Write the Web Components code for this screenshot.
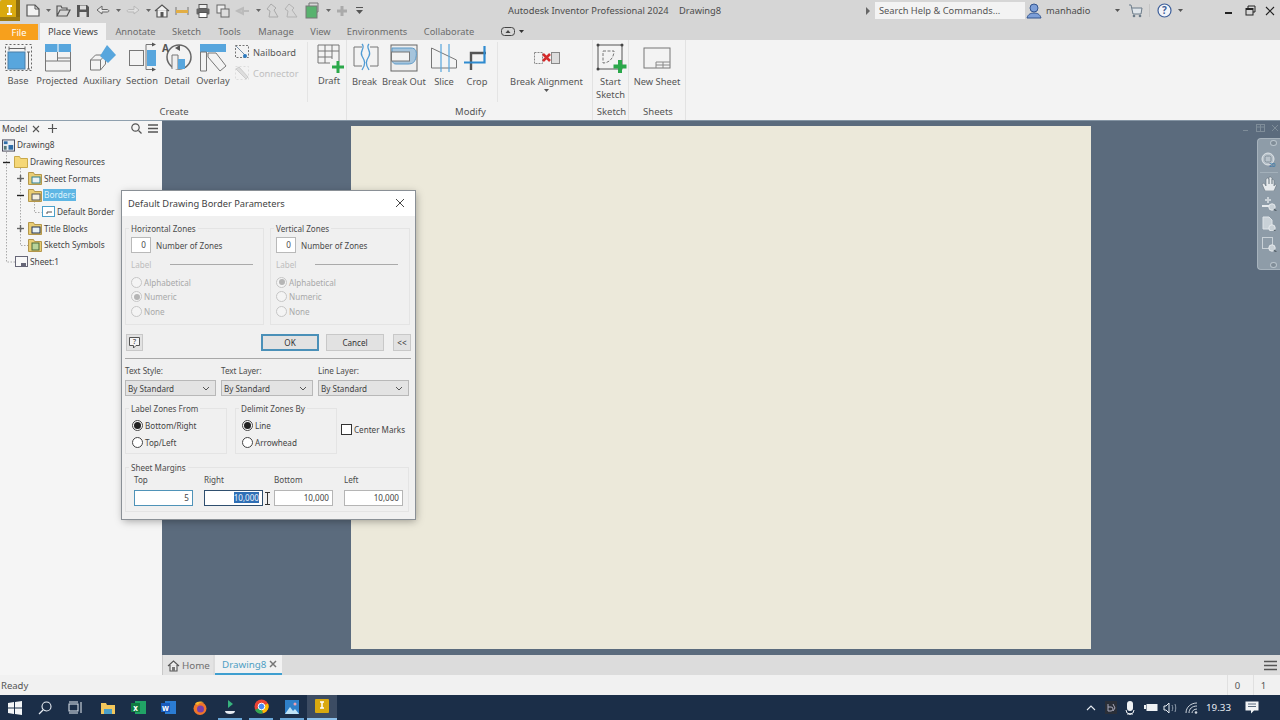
<!DOCTYPE html>
<html lang="en"><head><meta charset="utf-8"><title>Inventor</title>
<style>
html,body{margin:0;padding:0;width:1280px;height:720px;overflow:hidden;background:#5b6b7d;font:9.3px "Noto Sans",sans-serif;color:#4a4a4a}
svg{display:block}
</style></head><body>
<inv-app>
 <inv-titlebar slot="top">
  <qa-btn w="21"><svg width="21" height="22" viewBox="0 0 21 22"><rect x="0" y="0" width="20" height="21" rx="2" fill="#d9a90f"/><rect x="16" y="0" width="4" height="21" fill="#8d6d10"/><rect y="17" width="20" height="4" fill="#9c7a12"/><path d="M7 6h5M7 14h5M9.500 6v8" stroke="#fff" stroke-width="1.800"/></svg></qa-btn>
  <span style="width:2px"></span>
  <qa-btn w="20"><svg width="16" height="16"><path d="M2 2h8l4 4v7H2z" fill="#f2f2f2" stroke="#555" stroke-width="1.200"/><path d="M10 2v4h4" fill="none" stroke="#555"/></svg></qa-btn>
  <qa-btn w="10" caret></qa-btn>
  <qa-btn w="20"><svg width="16" height="16"><path d="M2 13V3h4l1 2h5v2M2 13l3-6h10l-3 6z" fill="none" stroke="#555" stroke-width="1.200"/></svg></qa-btn>
  <qa-btn w="20"><svg width="16" height="16"><path d="M2 2h10l2 2v10H2z" fill="#555"/><rect x="5" y="2.500" width="6" height="4" fill="#ddd"/><rect x="4.500" y="9" width="7" height="5" fill="#ddd"/></svg></qa-btn>
  <qa-btn w="20"><svg width="16" height="16"><path d="M7 3 2 7l5 4V9h5c1 0 2-.5 2-1s-1-1.500-2-1.500H7z" fill="#e8e8e8" stroke="#666"/></svg></qa-btn>
  <qa-btn w="10" caret></qa-btn>
  <qa-btn w="20"><svg width="16" height="16"><path d="M9 3l5 4-5 4V9H4C3 9 2 8.500 2 8s1-1.500 2-1.500h5z" fill="#e0e0e0" stroke="#b8b8b8"/></svg></qa-btn>
  <qa-btn w="10" caret></qa-btn>
  <qa-btn w="18"><svg width="16" height="16"><path d="M1 8l7-6 7 6M3 7v7h10V7" fill="#f1f1f1" stroke="#555" stroke-width="1.200"/><rect x="6.500" y="9" width="3" height="5" fill="#555"/></svg></qa-btn>
  <qa-btn w="21"><svg width="16" height="16"><path d="M2 4v8M14 4v8" stroke="#777"/><rect x="2" y="7" width="12" height="3" fill="#e2ae45"/></svg></qa-btn>
  <qa-btn w="21"><svg width="16" height="16"><rect x="4" y="1.500" width="8" height="4" fill="#eee" stroke="#555"/><rect x="1.500" y="5.500" width="13" height="6" rx="1" fill="#666"/><rect x="4" y="9.500" width="8" height="5" fill="#fff" stroke="#555"/></svg></qa-btn>
  <qa-btn w="20"><svg width="16" height="16"><rect x="2" y="2" width="8" height="8" fill="#eee" stroke="#666"/><rect x="6" y="6" width="8" height="8" fill="#ddd" stroke="#666"/></svg></qa-btn>
  <qa-btn w="20"><svg width="16" height="16"><path d="M2 8l6-3v6zM8 8h6" stroke="#bbb" fill="#c6c6c6" stroke-width="2"/></svg></qa-btn>
  <qa-btn w="10" caret></qa-btn>
  <qa-btn w="19"><svg width="16" height="16"><path d="M6 1l5 4-2 2 4 7H4l1-6-3-2z" fill="none" stroke="#aaa"/></svg></qa-btn>
  <qa-btn w="20"><svg width="16" height="16"><path d="M5 1l5 4-2 2 5 7H3l1-6-3-2z" fill="none" stroke="#b3b3b3"/></svg></qa-btn>
  <qa-btn w="22"><svg width="18" height="18"><rect x="2" y="4" width="11" height="12" fill="#58b26e" stroke="#777"/><path d="M5 4V1h9v9h-1" fill="none" stroke="#777"/></svg></qa-btn>
  <qa-btn w="8" caret></qa-btn>
  <qa-btn w="20"><svg width="14" height="14"><path d="M7 2v10M2 7h10" stroke="#aaa" stroke-width="3"/></svg></qa-btn>
  <qa-btn w="14"><svg width="9" height="9"><path d="M1 1.500h7" stroke="#555"/><path d="M1 4h7L4.500 8z" fill="#555"/></svg></qa-btn>
  <bar-text w="171" style="margin-left:142px">Autodesk Inventor Professional 2024</bar-text>
  <bar-text>Drawing8</bar-text>
  <span style="flex:1"></span>
  <svg width="6" height="8" style="margin-right:4px"><path d="M1 0l4 4-4 4z" fill="#666"/></svg>
  <inv-search>Search Help &amp; Commands...</inv-search>
  <svg width="16" height="16" style="margin:0 4px 0 1px"><circle cx="8" cy="5" r="4" fill="#7d9fd8" stroke="#33558f"/><path d="M1 15c1-4 4-5 7-5s6 1 7 5z" fill="#7d9fd8" stroke="#33558f"/></svg>
  <bar-text w="69">manhadio</bar-text>
  <svg width="6" height="4" style="margin-right:7px"><path d="M0 0h5L2.500 3z" fill="#555"/></svg>
  <svg width="15" height="14" style="margin-right:6px"><path d="M1 1h2l2 9h8l1-6H4" fill="#dfe5ea" stroke="#6a7a88"/><circle cx="6" cy="12" r="1.300" fill="#6a7a88"/><circle cx="12" cy="12" r="1.300" fill="#6a7a88"/></svg>
  <span style="width:1px;height:13px;background:#c6c6c6;margin-right:7px"></span>
  <svg width="15" height="15" style="margin-right:6px"><circle cx="7.500" cy="7.500" r="6.500" fill="#f2f4f8" stroke="#3d5f9b" stroke-width="1.200"/><text x="7.500" y="11" text-anchor="middle" font-size="10" font-weight="700" font-family="Noto Sans" fill="#3d5f9b">?</text></svg>
  <svg width="6" height="4"><path d="M0 0h5L2.500 3z" fill="#555"/></svg>
  <span style="width:41px"></span>
  <svg width="8" height="3" style="margin:5px 12px 0 0"><rect width="7" height="2" fill="#222"/></svg>
  <svg width="11" height="11" style="margin-right:9px"><path d="M3 3V1h7v6H8" fill="none" stroke="#222"/><rect x="1" y="3.500" width="7" height="6.500" fill="none" stroke="#222"/><path d="M1 4h7" stroke="#222" stroke-width="2"/></svg>
  <svg width="10" height="10" style="margin-right:5px"><path d="M1 1l8 8M9 1l-8 8" stroke="#222" stroke-width="1.100"/></svg>
 </inv-titlebar>
 <inv-tabs slot="top">
  <inv-tab w="38" file>File</inv-tab><span style="width:2px"></span>
  <inv-tab w="66" active>Place Views</inv-tab>
  <inv-tab w="59">Annotate</inv-tab>
  <inv-tab w="43">Sketch</inv-tab>
  <inv-tab w="43">Tools</inv-tab>
  <inv-tab w="50">Manage</inv-tab>
  <inv-tab w="39">View</inv-tab>
  <inv-tab w="74">Environments</inv-tab>
  <inv-tab w="70">Collaborate</inv-tab>
  <svg width="14" height="9" style="margin-left:17px;margin-bottom:4px"><rect x=".5" y=".5" width="13" height="8" rx="3" fill="none" stroke="#444"/><path d="M4.500 6l2.500-3 2.500 3z" fill="#444"/></svg>
  <svg width="5" height="4" style="margin-left:4px;margin-bottom:6px"><path d="M0 0h5L2.500 3z" fill="#333"/></svg>
 </inv-tabs>
 <inv-ribbon slot="top">
  <rb-group title="Create" w="347">
   <rb-tool label="Base" w="36" up><svg width="32" height="32"><rect x="3.500" y="2.500" width="26" height="26" fill="none" stroke="#666" stroke-dasharray="2 2"/><rect x="6" y="10" width="17" height="17" fill="#58a6dd" stroke="#4a7fa8"/><path d="M7 6.500h16M7 4.500v4M23 4.500v4M26.500 10v17M25 10h3M25 27h3" stroke="#666" fill="none"/></svg></rb-tool>
   <rb-tool label="Projected" w="42" up><svg width="32" height="32"><rect x="4" y="2" width="26" height="8" fill="#58a6dd"/><path d="M17 2v8" stroke="#fff"/><path d="M4.500 10v9h12v-9M4.500 19v10h25v-10h-13M29.500 10v9M16.500 19v-3h13" fill="none" stroke="#777"/></svg></rb-tool>
   <rb-tool label="Auxiliary" w="48" up><svg width="32" height="32"><path d="M4.500 18l5-5h10v9l-5 6H4.500z" fill="#f3f3f3" stroke="#777"/><path d="M4.500 18h10v10M14.500 18l5-5" fill="none" stroke="#777"/><path d="M14 14L21 3l9 10-8 8z" fill="#58a6dd"/></svg></rb-tool>
   <rb-tool label="Section" w="32" up><svg width="32" height="32"><rect x="3.500" y="8.500" width="14" height="15" fill="none" stroke="#777"/><rect x="21" y="8" width="9" height="16" fill="#58a6dd"/><path d="M20 2.500v25M20 2.500h7M20 27.500h7" stroke="#777" fill="none"/><path d="M26 .5l4 2-4 2zM26 25.500l4 2-4 2z" fill="#555"/></svg></rb-tool>
   <rb-tool label="Detail" w="38" up><svg width="32" height="32"><circle cx="18" cy="15" r="12" fill="none" stroke="#666" stroke-width="1.500"/><path d="M11 27V13h6v14" fill="#eee" stroke="#777"/><path d="M17 27V17h7v10z" fill="#58a6dd"/><text x="1" y="10" font-size="10" font-weight="700" font-family="Noto Sans" fill="#555">A</text><path d="M14 6l5-3v6z" fill="#555"/></svg></rb-tool>
   <rb-tool label="Overlay" w="34" up><svg width="32" height="32"><rect x="3" y="2" width="26" height="8" fill="#58a6dd"/><path d="M3.500 10h6v19h-6z" fill="none" stroke="#777"/><path d="M11 11h8l10 13-6 5-12-14z" fill="none" stroke="#777"/></svg></rb-tool>
   <rb-small>
    <rb-mini label="Nailboard"><svg width="14" height="14"><rect x=".5" y=".5" width="13" height="12" fill="none" stroke="#777" stroke-dasharray="2 1.500"/><path d="M1 1l10 10" stroke="#7892aa"/><circle cx="10" cy="11" r="2" fill="#2b7ac0"/></svg></rb-mini>
    <rb-mini label="Connector" off><svg width="14" height="14"><path d="M1 3l3-2 9 10-2 2z" fill="#ddd" stroke="#ccc"/><rect x=".5" y=".5" width="13" height="13" fill="none" stroke="#ddd" stroke-dasharray="2 2"/></svg></rb-mini>
   </rb-small>
   <rb-sep></rb-sep>
   <rb-tool label="Draft" w="36" up><svg width="32" height="32"><path d="M5 3h21v16M5 3v18h12M5 9h21M5 15h14M12 3v18M19 3v14" fill="none" stroke="#777"/><path d="M25 19v12M19 25h12" stroke="#2ba84a" stroke-width="3"/></svg></rb-tool>
  </rb-group>
  <rb-group title="Modify" w="246">
   <rb-tool label="Break" w="35"><svg width="32" height="32"><path d="M5 5h8M5 24h8M5 5v19M29 5v19M21 5h8M21 24h8" fill="none" stroke="#777"/><path d="M13 2c4 4-3 7 0 12s4 8 0 14M20 2c-4 4 3 7 0 12s-4 8 0 14" fill="none" stroke="#4f9bd4" stroke-width="1.300"/></svg></rb-tool>
   <rb-tool label="Break Out" w="44"><svg width="32" height="32"><rect x="3" y="3" width="26" height="26" fill="#eee" stroke="#666"/><path d="M4 6h19c5 0 6 4 5 9s-3 7-8 7H8C4 22 4 18 4 14z" fill="#a5c4dc" stroke="#5c9ac8"/><rect x="3.500" y="10" width="18" height="9" fill="#f3f3f3" stroke="#777"/></svg></rb-tool>
   <rb-tool label="Slice" w="36"><svg width="32" height="32"><path d="M3.500 6v20h25v-8z" fill="none" stroke="#777"/><path d="M13 2v28M21 2v28" stroke="#58a6dd" stroke-width="1.200"/></svg></rb-tool>
   <rb-tool label="Crop" w="30"><svg width="32" height="32"><path d="M10 28V11h15" fill="none" stroke="#555" stroke-width="2.400"/><path d="M3 20.500h20.500V4" fill="none" stroke="#2f8bd0" stroke-width="2.200"/></svg></rb-tool>
   <rb-sep style="margin-left:5px;margin-right:1px"></rb-sep>
   <rb-tool label="Break Alignment" w="95" caret><svg width="32" height="32"><rect x="3.500" y="10.500" width="8" height="11" fill="none" stroke="#888" stroke-dasharray="2 1"/><rect x="20.500" y="10.500" width="8" height="11" fill="#ddd" stroke="#888"/><path d="M12 12l7 7M19 12l-7 7" stroke="#d42b2b" stroke-width="2.500"/></svg></rb-tool>
  </rb-group>
  <rb-group title="Sketch" w="36"><rb-tool label="Start Sketch" w="35" two><svg width="32" height="32"><rect x="3" y="3" width="24" height="24" fill="none" stroke="#555"/><path d="M8 9h11c0 6-4 12-11 12z" fill="none" stroke="#777" stroke-dasharray="3 1.500"/><g fill="#444"><circle cx="3" cy="3" r="1.500"/><circle cx="27" cy="3" r="1.500"/><circle cx="3" cy="27" r="1.500"/></g><path d="M25 18v13M18.500 24.500h13" stroke="#2ba84a" stroke-width="4"/></svg></rb-tool></rb-group>
  <rb-group title="Sheets" w="57"><rb-tool label="New Sheet" w="56"><svg width="32" height="32"><rect x="3" y="6" width="26" height="20" fill="none" stroke="#777"/><path d="M15 26v-6h14M22 20v6M15 23h14" fill="none" stroke="#888"/></svg></rb-tool></rb-group>
 </inv-ribbon>

 <inv-browser slot="side">
   <tree-row pad="2" name="Drawing8"><svg width="13" height="13" viewBox="0 0 14 13"><rect x=".5" y=".5" width="13" height="12" fill="#e8eef3" stroke="#445"/><rect x="2" y="2" width="4" height="3" fill="#2e6ca8"/><rect x="7" y="6" width="5" height="5" fill="#2e6ca8"/><rect x="2" y="7" width="3" height="4" fill="#577"/></svg></tree-row>
   <tree-row pad="14" name="Drawing Resources" exp="minus" ex="2"><svg width="14" height="13"><path d="M.5 12.500V1.500h5l1 2h7v9z" fill="#f5d777" stroke="#c9a94a"/></svg></tree-row>
   <tree-row pad="28" name="Sheet Formats" exp="plus" ex="16"><svg width="14" height="13"><path d="M.5 12.500V.5h5l1 2h7v10z" fill="#e9cd74" stroke="#b5974a"/><rect x="4" y="5" width="8" height="6" fill="#e8f1f4" stroke="#2f7f90"/></svg></tree-row>
   <tree-row pad="28" name="Borders" exp="minus" ex="16" sel><svg width="14" height="13"><path d="M.5 12.500V.5h5l1 2h7v10z" fill="#e9cd74" stroke="#b5974a"/><rect x="4" y="5" width="8" height="6" fill="#f3efe0" stroke="#555"/></svg></tree-row>
   <tree-row pad="42" name="Default Border"><svg width="13" height="11"><rect x=".5" y=".5" width="12" height="10" fill="#fff" stroke="#4b9fc9"/><path d="M5 8V6h5" fill="none" stroke="#555"/></svg></tree-row>
   <tree-row pad="28" name="Title Blocks" exp="plus" ex="16"><svg width="14" height="13"><path d="M.5 12.500V.5h5l1 2h7v10z" fill="#e9cd74" stroke="#b5974a"/><rect x="4" y="5" width="8" height="6" fill="#e8f1f4" stroke="#235"/></svg></tree-row>
   <tree-row pad="28" name="Sketch Symbols"><svg width="14" height="13"><path d="M.5 12.500V.5h5l1 2h7v10z" fill="#e9cd74" stroke="#b5974a"/><rect x="4" y="4" width="7" height="7" fill="#b9d39a" stroke="#4a6a3a"/></svg></tree-row>
   <tree-row pad="14" name="Sheet:1"><svg width="14" height="11"><rect x="1.500" y=".5" width="12" height="10" fill="#f8f8f8" stroke="#667"/><rect x="7" y="7" width="5" height="3" fill="#667"/></svg></tree-row>
 </inv-browser>

 <inv-canvas slot="main"></inv-canvas>
 <inv-doctabs slot="main"></inv-doctabs>
 <inv-status slot="bottom"></inv-status>
 <inv-taskbar slot="bottom"></inv-taskbar>

 <inv-dialog slot="over" title="Default Drawing Border Parameters">
  <div style="display:flex;gap:6px">
   <dlg-group label="Horizontal Zones" w="139" h="97"><zone-body sel="Numeric"></zone-body></dlg-group>
   <dlg-group label="Vertical Zones" w="140" h="97"><zone-body sel="Alphabetical"></zone-body></dlg-group>
  </div>
  <div style="display:flex;align-items:center;margin:9px 0 0 1px;height:17px">
   <dlg-btn w="17" kind="help"></dlg-btn><span style="width:118px"></span>
   <dlg-btn w="58" primary>OK</dlg-btn><span style="width:7px"></span>
   <dlg-btn w="58">Cancel</dlg-btn><span style="width:9px"></span>
   <dlg-btn w="18">&lt;&lt;</dlg-btn>
  </div>
  <div style="height:1px;background:#a8a8a8;margin:7px 0 0 0;width:286px"></div>
  <div style="display:flex;gap:5px;margin-top:5px">
   <dlg-select label="Text Style:" w="91"></dlg-select>
   <dlg-select label="Text Layer:" w="92"></dlg-select>
   <dlg-select label="Line Layer:" w="91"></dlg-select>
  </div>
  <div style="display:flex;margin-top:12px;align-items:flex-start">
   <dlg-group label="Label Zones From" w="102" h="46"><div style="display:grid;gap:2px;padding:9px 0 0 6px"><dlg-radio on dark>Bottom/Right</dlg-radio><dlg-radio dark>Top/Left</dlg-radio></div></dlg-group>
   <span style="width:8px"></span>
   <dlg-group label="Delimit Zones By" w="102" h="46"><div style="display:grid;gap:2px;padding:9px 0 0 6px"><dlg-radio on dark>Line</dlg-radio><dlg-radio dark>Arrowhead</dlg-radio></div></dlg-group>
   <dlg-check style="margin:15px 0 0 4px">Center Marks</dlg-check>
  </div>
  <div style="margin-top:13px">
   <dlg-group label="Sheet Margins" w="284" h="45">
    <div style="display:flex;gap:11px;padding:5px 0 0 8px">
     <dlg-field label="Top" value="5" state="focusblue"></dlg-field>
     <dlg-field label="Right" value="10,000" state="sel"></dlg-field>
     <dlg-field label="Bottom" value="10,000"></dlg-field>
     <dlg-field label="Left" value="10,000"></dlg-field>
    </div>
   </dlg-group>
  </div>
  <svg slot="cursor" width="7" height="13" style="position:absolute;left:142px;top:301px"><path d="M1 .5h5M1 12.500h5M3.500 1v11" stroke="#333"/></svg>
 </inv-dialog>
</inv-app>

<script>
const F='"Noto Sans",sans-serif';
function def(name,render){customElements.define(name,class extends HTMLElement{connectedCallback(){if(this.shadowRoot)return;this.attachShadow({mode:'open'}).innerHTML=render(this)}})}
const a=(e,n,d='')=>e.hasAttribute(n)?e.getAttribute(n):d;

def('inv-app',()=>`<style>:host{display:block;position:relative;width:1280px;height:720px;overflow:hidden}
.w{display:grid;grid-template-rows:120px 555px 45px;height:720px}
.m{display:grid;grid-template-columns:162px 1118px;min-height:0}
.r{display:grid;grid-template-rows:535px 20px;min-height:0}</style>
<div class="w"><div><slot name="top"></slot></div><div class="m"><slot name="side"></slot><div class="r"><slot name="main"></slot></div></div><div><slot name="bottom"></slot></div></div><slot name="over"></slot>`);

def('inv-titlebar',()=>`<style>:host{display:flex;align-items:center;height:21px;background:#d6d6d6;font:9.3px ${F};color:#4c4c4c;white-space:nowrap}</style><slot></slot>`);
def('bar-text',e=>`<style>:host{display:block;flex:none;${e.hasAttribute('w')?`width:${a(e,'w')}px;`:''}}</style><slot></slot>`);
def('inv-search',()=>`<style>:host{display:flex;align-items:center;width:150px;height:17px;box-sizing:border-box;padding-left:4px;background:#f3f3f3;color:#555;flex:none}</style><slot></slot>`);
def('qa-btn',e=>`<style>:host{display:flex;justify-content:center;align-items:center;width:${a(e,'w')}px;height:21px;flex:none}</style>${e.hasAttribute('caret')?'<svg width="5" height="4"><path d="M0 0h5L2.500 3z" fill="#666"/></svg>':'<slot></slot>'}`);
def('inv-tabs',()=>`<style>:host{display:flex;align-items:flex-end;height:19px;background:#d6d6d6;font:9.3px ${F};color:#666;white-space:nowrap}</style><slot></slot>`);
def('inv-tab',e=>{const act=e.hasAttribute('active'),f=e.hasAttribute('file');return `<style>:host{display:flex;justify-content:center;align-items:center;width:${a(e,'w')}px;height:${f?16:17}px;background:${act?'#f3f3f3':f?'#f7a01c':'transparent'};color:${act?'#3f3f3f':f?'#fff':'#6c6c6c'};flex:none}</style><slot></slot>`});
def('inv-ribbon',()=>`<style>:host{display:flex;height:80px;background:#f3f3f3;font:9.3px ${F};color:#555}</style><slot></slot>`);
def('rb-group',e=>`<style>:host{display:flex;flex-direction:column;width:${a(e,'w')}px;flex:none;box-sizing:border-box;border-right:1px solid #e2e2e2}
.t{display:flex;flex:1;align-items:flex-start;height:63px}.c{height:17px;padding:2px 0 0 2px;box-sizing:border-box;text-align:center;color:#555;line-height:14px;font-size:9.500px}</style><div class="t"><slot></slot></div><div class="c">${a(e,'title')}</div>`);
def('rb-tool',e=>{const l=a(e,'label');const two=e.hasAttribute('two');const parts=two?l.split(' '):[l];return `<style>:host{display:flex;flex-direction:column;align-items:center;width:${a(e,'w')}px;flex:none;padding-top:2px;box-sizing:border-box}
.i{height:32px;display:flex;align-items:center}.l{white-space:nowrap;line-height:13px;text-align:center;margin-top:${e.hasAttribute('up')?0:1}px;color:#555}</style><div class="i"><slot></slot></div><div class="l">${parts.join('<br>')}</div>${e.hasAttribute('caret')?'<svg width="5" height="4" style="display:block;margin-top:1px"><path d="M0 0h5L2.500 3z" fill="#555"/></svg>':''}`});
def('rb-small',()=>`<style>:host{display:flex;flex-direction:column;gap:7px;width:77px;padding:5px 0 0 5px;box-sizing:border-box;flex:none}</style><slot></slot>`);
def('rb-mini',e=>`<style>:host{display:flex;align-items:center;gap:4px;height:14px;color:${e.hasAttribute('off')?'#c0c0c0':'#555'}}</style><slot></slot><span>${a(e,'label')}</span>`);
def('rb-sep',()=>`<style>:host{display:block;width:1px;height:60px;background:#e4e4e4;margin:2px 3px 0 0;flex:none}</style>`);

def('inv-browser',()=>`<style>:host{display:block;background:#f5f5f5;font:8.300px ${F};color:#444;position:relative;border-top:1px solid #8fa0ae;box-sizing:border-box}
.h{display:flex;align-items:center;height:15px;padding:0 2px;color:#444;font-size:8.600px}.s{flex:1}
.tree{position:relative;padding-top:1px}.g{position:absolute;left:0;top:0}</style>
<svg class="g" width="60" height="150"><path d="M6.500 31V141h9M20.500 47V124.500h8M20.500 58h3M20.500 108h3M34.500 80v11.500h7" fill="none" stroke="#aaa" stroke-dasharray="1.500 1.500"/></svg>
<div class="h"><span>Model</span><svg width="8" height="8" style="margin-left:5px"><path d="M1 1l6 6M7 1l-6 6" stroke="#555" stroke-width="1.100"/></svg><svg width="9" height="9" style="margin-left:8px"><path d="M4.500 0v9M0 4.500h9" stroke="#555" stroke-width="1.200"/></svg><span class="s"></span>
<svg width="11" height="11" style="margin-right:6px"><circle cx="4.500" cy="4.500" r="3.700" fill="none" stroke="#555" stroke-width="1.200"/><path d="M7.500 7.500l3 3" stroke="#555" stroke-width="1.300"/></svg>
<svg width="10" height="9" style="margin-right:2px"><path d="M0 1h10M0 4.500h10M0 8h10" stroke="#555" stroke-width="1.300"/></svg></div>
<div class="tree"><slot></slot></div>`);
def('tree-row',e=>{const x=a(e,'exp'),sel=e.hasAttribute('sel');const name=a(e,'name');
 const exp=x?`<svg width="9" height="9" style="position:absolute;left:${a(e,'ex')}px;top:4px"><path d="M1 4.500h7" stroke="${x=='minus'?'#222':'#666'}" stroke-width="1.400"/>${x=='plus'?'<path d="M4.500 1v7" stroke="#666" stroke-width="1.400"/>':''}</svg>`:'';
 return `<style>:host{display:flex;align-items:center;height:16.670px;position:relative;white-space:nowrap;color:#444}
 .pad{width:${a(e,'pad')}px;flex:none}.n{margin-left:1px;padding:0 1px;${sel?'background:#5eb6e4;color:#dff3fb;':''}line-height:12px}</style>
 ${exp}<span class="pad"></span><slot></slot><span class="n">${name}</span>`});

def('inv-canvas',()=>`<style>:host{display:block;position:relative;background:#5b6b7d;border-top:1px solid #8494a3;box-sizing:border-box}
.sheet{width:740px;height:523px;background:#ece9da;margin:5px 0 0 189px}
.ctl{position:absolute;top:3px;right:0;display:flex;gap:6px;padding-right:1px}
.nav{position:absolute;left:1095px;top:17px;width:23px;height:132px;background:#8e9ca8;border-radius:4px 0 0 4px;border:1px solid #a7b3bd;border-right:none;box-sizing:border-box;display:flex;flex-direction:column;align-items:center;padding:1px 0;gap:5px}
.dot{width:5px;height:5px;border-radius:50%;background:#7f8c97;border:1px solid #b9c4cc;align-self:flex-end;margin-right:3px}.nl{width:18px;height:1px;background:#a3b0ba;margin:-2px 0 -2px}</style>
<div class="sheet"></div>
<div class="ctl"><svg width="8" height="8"><path d="M1 6.500h5" stroke="#7f8d99"/></svg><svg width="9" height="8"><rect x=".5" y=".5" width="8" height="7" fill="none" stroke="#7f8d99"/><path d="M4.500 0v8M0 3h9" stroke="#7f8d99"/></svg><svg width="8" height="8"><path d="M1 1l6 6M7 1l-6 6" stroke="#7f8d99"/></svg></div>
<div class="nav"><span class="dot"></span>
<svg width="21" height="18" style="overflow:visible"><circle cx="9" cy="8" r="6" fill="#b9c3cb" stroke="#dfe4e8"/><rect x="6" y="5" width="6" height="6" rx="1.500" fill="none" stroke="#7f8c97"/><text x="10" y="16" font-size="5" font-weight="700" font-family="Noto Sans" fill="#4a7fa8">2D</text></svg>
<span class="nl"></span>
<svg width="16" height="17"><path d="M4 15L1 8l2-1 2 3V3l1.500-1L8 3v5-7l2 0 1 1v6-5l2 1v6l1-2 1.500 1L13 15z" fill="#e6eaed" stroke="#66727c" stroke-width=".6"/></svg>
<svg width="17" height="17"><path d="M7 1v6M4 4h6" stroke="#c9d1d7" stroke-width="2"/><path d="M1 10h8" stroke="#e6eaed" stroke-width="2"/><circle cx="11" cy="11" r="3.200" fill="#c9d1d7" stroke="#e6eaed"/><path d="M13 13l3 3" stroke="#5a666f" stroke-width="1.500"/></svg>
<svg width="17" height="18"><path d="M2 1h6l3 3v9H2z" fill="#c9d1d7" stroke="#dfe4e8"/><circle cx="11" cy="12" r="3.200" fill="#c9d1d7" stroke="#e6eaed"/><path d="M13 14l3 3" stroke="#5a666f" stroke-width="1.500"/></svg>
<svg width="17" height="18"><rect x="1.500" y="1.500" width="10" height="11" fill="none" stroke="#c9d1d7"/><circle cx="11" cy="12" r="3.200" fill="#c9d1d7" stroke="#e6eaed"/><path d="M13 14l3 3" stroke="#5a666f" stroke-width="1.500"/></svg>
<span style="flex:1"></span><span class="dot" style="margin-right:3px"></span></div>`);
def('inv-doctabs',()=>`<style>:host{display:flex;align-items:stretch;background:#dcdcdc;font:9.800px ${F};color:#6f6f6f;white-space:nowrap}
.home{display:flex;align-items:center;gap:2px;padding-left:4px;width:51px;box-sizing:border-box;background:#e3e3e3;border-left:1px solid #c8c8c8}
.doc{display:flex;align-items:center;gap:3px;padding-left:7px;width:67px;background:#f2f2f2;color:#4f9fc4;border-bottom:2px solid #3f9fd0;box-sizing:border-box;margin-left:2px}
.s{flex:1}.m{align-self:center;margin-right:3px}</style>
<div class="home"><svg width="13" height="13"><path d="M1 7l5.500-5L12 7M3 6v6h7V6" fill="#eee" stroke="#555" stroke-width="1.100"/><rect x="5" y="8" width="3" height="4" fill="#777"/></svg>Home</div>
<div class="doc">Drawing8<svg width="8" height="8"><path d="M1 1l6 6M7 1l-6 6" stroke="#777" stroke-width="1.500"/></svg></div><span class="s"></span>
<svg class="m" width="13" height="11"><path d="M0 1.500h13M0 5.500h13M0 9.500h13" stroke="#555" stroke-width="1.300"/></svg>`);
def('inv-status',()=>`<style>:host{display:flex;align-items:center;height:20px;background:#f1f1f1;font:9.500px ${F};color:#555}.s{flex:1;padding-left:1px}
.c{width:26px;height:20px;display:flex;align-items:center;justify-content:center;padding-right:6px;border-left:1px solid #e0e0e0;box-sizing:border-box}</style><span class="s">Ready</span><span class="c">0</span><span class="c">1</span><span style="width:1px"></span>`);
def('inv-taskbar',()=>`<style>:host{display:flex;align-items:center;height:25px;background:#1b2e48;font:9.800px ${F};color:#e8edf3;white-space:nowrap}
 .t{display:flex;align-items:center;justify-content:center;height:25px;flex:none;box-sizing:border-box}
 .u{border-bottom:2px solid #6aa7d8;width:24px}.a{background:#3c4c63;border-bottom:2px solid #8cc0ea}</style>
 <span class="t" style="width:30px"><svg width="14" height="14"><path d="M0 2l6-1v5.500H0zM7 1l7-1v6.500H7zM0 7.500h6V13l-6-1zM7 7.500h7V14l-7-1z" fill="#f4f6f8"/></svg></span>
 <span class="t" style="width:30px"><svg width="14" height="14"><circle cx="8.500" cy="5.500" r="4.500" fill="none" stroke="#e8edf3" stroke-width="1.100"/><path d="M5 9l-4 4" stroke="#e8edf3" stroke-width="1.300"/></svg></span>
 <span class="t" style="width:30px"><svg width="15" height="13"><rect x="1" y="3" width="9" height="7" fill="none" stroke="#e8edf3"/><path d="M1 1h9M1 12h9M13 1v11" stroke="#e8edf3"/></svg></span>
 <span style="width:2px"></span>
 <span class="t" style="width:31px"><svg width="14" height="12"><path d="M0 1h5l1 2h8v9H0z" fill="#f2c75c"/><rect x="3" y="7" width="8" height="5" fill="#4a9fc9"/></svg></span>
 <span class="t" style="width:30px"><svg width="15" height="13"><rect x="4" y="0" width="11" height="13" fill="#21a366"/><rect x="0" y="2" width="9" height="9" fill="#107c41"/><text x="4.500" y="9.500" text-anchor="middle" font-size="8" font-weight="700" fill="#fff" font-family="Noto Sans">x</text></svg></span>
 <span class="t" style="width:31px"><svg width="15" height="13"><rect x="4" y="0" width="11" height="13" fill="#2b7cd3"/><rect x="0" y="2" width="9" height="9" fill="#185abd"/><text x="4.500" y="9.500" text-anchor="middle" font-size="8" font-weight="700" fill="#fff" font-family="Noto Sans">w</text></svg></span>
 <span class="t" style="width:31px"><svg width="14" height="14"><circle cx="7" cy="7.500" r="6.500" fill="#f0762a"/><circle cx="7.500" cy="8" r="3.500" fill="#7b3fa8"/><path d="M2 3c2-3 7-3 9-1-3-1-5 0-6 2z" fill="#f7b52c"/></svg></span>
 <span style="width:3px"></span><span class="t u"><svg width="16" height="15"><path d="M3 12h10c0 2-2 3-5 3s-5-1-5-3z" fill="#e8edf3"/><path d="M6 1l5 4-5 4z" fill="#37b37e"/></svg></span>
 <span style="width:7px"></span><span class="t u"><svg width="15" height="15"><circle cx="7.500" cy="7.500" r="7" fill="#ea4335"/><path d="M7.500 7.500L1 11a7 7 0 0 0 8 3.300z" fill="#34a853"/><path d="M7.500 7.500L9 14.300A7 7 0 0 0 14 4.500z" fill="#fbbc05"/><circle cx="7.500" cy="7.500" r="3.300" fill="#4a8af4" stroke="#fff"/></svg></span>
 <span style="width:7px"></span><span class="t u"><svg width="14" height="14"><rect width="14" height="14" fill="#2f80c9"/><path d="M0 14l5-7 3 4 2-2 4 5z" fill="#bfe3f7"/><circle cx="10" cy="4" r="1.500" fill="#f0a0b0"/></svg></span>
 <span style="width:3px"></span><span class="t a" style="width:30px"><svg width="14" height="15"><rect width="14" height="14" rx="1" fill="#d9a90f"/><path d="M5 3h4M5 9h4M7 3v6" stroke="#fff" stroke-width="1.500"/></svg></span>
 <span style="flex:1"></span>
 <svg width="10" height="6" style="margin-right:9px"><path d="M1 5l4-4 4 4" fill="none" stroke="#e8edf3" stroke-width="1.100"/></svg>
 <svg width="12" height="13" style="margin-right:8px"><rect width="12" height="13" fill="#2a2f38"/><path d="M3 3v7h3a2 2 0 0 0 0-4H3M8 3l2 4-2 3" fill="none" stroke="#aab"/></svg>
 <svg width="10" height="14" style="margin-right:9px"><rect x="2" y="0" width="6" height="10" rx="3" fill="#eef1f4"/><path d="M1 9a4 4 0 0 0 8 0M5 12v2M2 14h6" stroke="#eef1f4" fill="none"/></svg>
 <svg width="14" height="9" style="margin-right:5px"><rect x="0" y="2" width="2" height="4" fill="#eef1f4"/><rect x="2.500" y="1" width="11" height="7" fill="#eef1f4"/></svg>
 <svg width="15" height="12" style="margin-right:7px"><path d="M1 4h2l3-3v10L3 8H1z" fill="none" stroke="#e8edf3"/><path d="M9 3c1 2 1 4 0 6M12 2c1 3 1 5 0 8" fill="none" stroke="#8e9bab"/></svg>
 <svg width="13" height="12" style="margin-right:8px"><path d="M1 11c0-6 5-10 11-10M4 11c0-4 3-7 8-7M7 11c0-2 2-4 5-4" fill="none" stroke="#cfd6de"/><circle cx="11" cy="10.500" r="1.300" fill="#cfd6de"/></svg>
 <span style="margin-right:14px">19.33</span>
 <svg width="14" height="13" style="margin-right:21px"><path d="M.5.5h13v9H9l-3 3v-3H.5z" fill="#f1f3f5"/><path d="M3 3h8M3 5.500h8" stroke="#5a6b7e"/></svg>`);

def('inv-dialog',e=>`<style>:host{position:absolute;left:122px;top:191px;width:293px;height:328px;background:#f0f0f0;box-shadow:0 0 0 1px #8a9096,1px 2px 8px rgba(0,0,0,.35);font:8.100px ${F};color:#444;display:block}
.h{display:flex;align-items:center;height:24px;padding-bottom:1px;background:#fff;padding-left:6px;padding-right:10px;font-size:9.300px;color:#3f3f3f}.s{flex:1}
.b{padding:12px 0 0 3px}</style><div class="h"><span>${a(e,'title')}</span><span class="s"></span><svg width="10" height="10"><path d="M1 1l8 8M9 1l-8 8" stroke="#444" stroke-width="1"/></svg></div><div class="b"><slot></slot></div><slot name="cursor"></slot>`);
def('dlg-group',e=>`<style>:host{display:block;position:relative;width:${a(e,'w')}px;height:${a(e,'h')}px;box-sizing:border-box;border:1px solid #e4e4e4;flex:none}
.l{position:absolute;left:3px;top:-6px;background:#f0f0f0;padding:0 2px;line-height:11px;color:#4c4c4c}</style><span class="l">${a(e,'label')}</span><slot></slot>`);
def('zone-body',e=>{const s=a(e,'sel');return `<style>:host{display:block;padding:8px 0 0 5px}.n{display:flex;align-items:center;gap:5px;height:16px;color:#4a4a4a}
.b{width:20px;height:16px;background:#fff;border:1px solid #b9b9b9;box-sizing:border-box;text-align:right;padding-right:4px;line-height:14px}
.lb{display:flex;align-items:center;gap:19px;color:#bdbdbd;height:11px;margin:6px 0 6px 0;width:122px}.lb i{flex:1;height:1px;background:#aaa}
.r{display:grid;gap:2.500px}</style><div class="n"><span class="b">0</span><span>Number of Zones</span></div><div class="lb"><span>Label</span><i></i></div>
<div class="r"><dlg-radio ${s=='Alphabetical'?'on':''}>Alphabetical</dlg-radio><dlg-radio ${s=='Numeric'?'on':''}>Numeric</dlg-radio><dlg-radio>None</dlg-radio></div>`});
def('dlg-radio',e=>{const d=e.hasAttribute('dark'),on=e.hasAttribute('on');return `<style>:host{display:flex;align-items:center;gap:2px;height:${d?15:12}px;color:${d?'#444':'#a9a9a9'}}
.c{width:11px;height:11px;border-radius:50%;border:1px solid ${d?'#444':'#c6c6c6'};background:${d?'#fff':'#f4f4f4'};box-sizing:border-box;display:flex;align-items:center;justify-content:center;flex:none}
.c i{width:${d?7:6}px;height:${d?7:6}px;border-radius:50%;background:${d?'#222':'#b5b5b5'}}</style><span class="c">${on?'<i></i>':''}</span><slot></slot>`});
def('dlg-btn',e=>{const h=a(e,'kind')=='help',p=e.hasAttribute('primary');return `<style>:host{display:flex;align-items:center;justify-content:center;width:${a(e,'w')}px;height:17px;box-sizing:border-box;background:#e2e2e2;border:${p?2:1}px solid ${p?'#4a90b8':'#c8c8c8'};color:#333;flex:none}</style>${h?'<svg width="11" height="12"><path d="M.5.5h10v8H7L4.500 11V8.500H.5z" fill="#f5f5f5" stroke="#555"/><text x="5.500" y="7" text-anchor="middle" font-size="7" font-family="Noto Sans" fill="#333">?</text></svg>':'<slot></slot>'}`});
def('dlg-select',e=>`<style>:host{display:block;width:${a(e,'w')}px;flex:none}.l{height:16px;line-height:13px;color:#4c4c4c}.b{display:flex;align-items:center;height:16px;background:#e3e3e3;border:1px solid #b8b8b8;box-sizing:border-box;padding:0 5px 0 2px;color:#444}.s{flex:1}</style><div class="l">${a(e,'label')}</div><div class="b">By Standard<span class="s"></span><svg width="8" height="5"><path d="M1 1l3 3 3-3" fill="none" stroke="#555"/></svg></div>`);
def('dlg-check',()=>`<style>:host{display:flex;align-items:center;gap:2px;color:#444;height:12px;white-space:nowrap}i{width:11px;height:11px;background:#fff;border:1px solid #333;box-sizing:border-box;display:block;flex:none}</style><i></i><slot></slot>`);
def('dlg-field',e=>{const s=a(e,'state'),v=a(e,'value');const bc=s=='sel'?'#2f4f6f':s=='focusblue'?'#4f93b8':'#b5b5b5';return `<style>:host{display:block;width:59px;flex:none}.l{height:17px;line-height:14px;color:#4c4c4c;box-sizing:border-box}
.b{height:16px;background:#fff;border:1px solid ${bc};box-sizing:border-box;text-align:right;padding-right:3px;line-height:14px;color:#444}
mark{background:#2f6fb5;color:#e9f2fb}</style><div class="l">${a(e,'label')}</div><div class="b">${s=='sel'?`<mark>${v}</mark>`:v}</div>`});
</script>
</body></html>
